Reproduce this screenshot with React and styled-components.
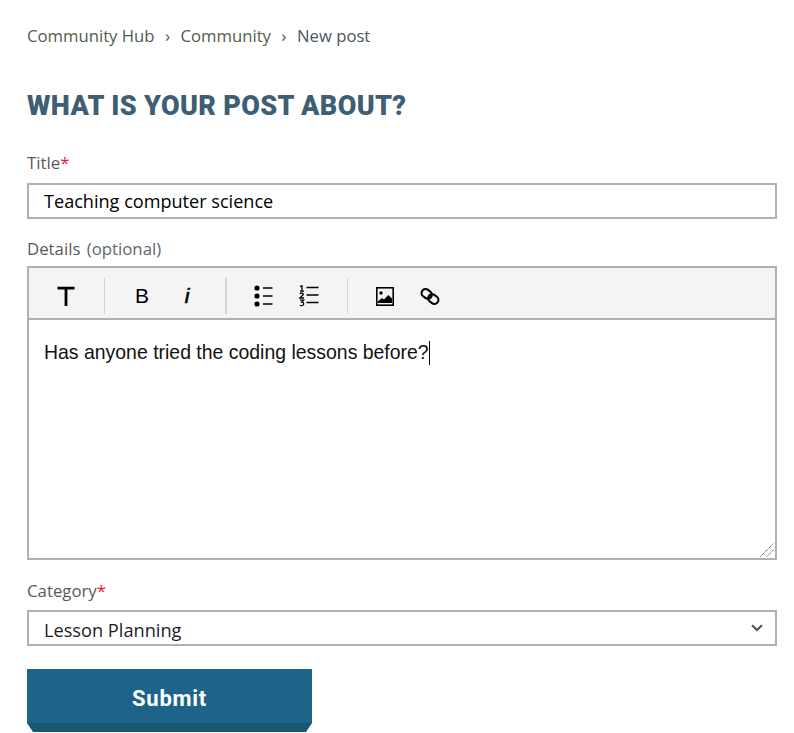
import React from "react";
import styled, { createGlobalStyle } from "styled-components";

const Global = createGlobalStyle`
  html, body { margin: 0; padding: 0; background: #fff; }
  * { box-sizing: border-box; }
`;
const Page = styled.main`
  width: 794px;
  height: 733px;
  overflow: hidden;
  padding: 25px 17px 0 27px;
  font-family: "Open Sans", "Noto Sans", sans-serif;
`;
const Crumbs = styled.nav`
  display: flex;
  align-items: center;
  height: 22px;
  font-size: 16.7px;
  line-height: 22px;
`;
const Crumb = styled.span`
  color: ${(p) => (p.$current ? "#4a5560" : "#4f5d4c")};
`;
const Sep = styled.span`
  width: 26px;
  text-align: center;
  font-size: 16px;
  color: #3d4d55;
`;
const Heading = styled.h1`
  margin: 44px 0 0;
  height: 30px;
  font-family: "Roboto", sans-serif;
  font-weight: 900;
  font-size: 27px;
  line-height: 30px;
  letter-spacing: 0.35px;
  color: #3e5e73;
  text-transform: uppercase;
  white-space: nowrap;
`;
const Label = styled.label`
  display: block;
  font-size: 16.8px;
  line-height: 22px;
  height: 22px;
  color: #58595b;
  margin-top: ${(p) => p.$top}px;
`;
const Req = styled.span`
  color: #f0142f;
`;
const Optional = styled.span`
  color: #5d6670;
  margin-left: 2px;
`;
const TextField = styled.input`
  display: block;
  width: 100%;
  height: 36px;
  margin-top: 9px;
  border: 2px solid #b0b0b0;
  border-radius: 0;
  padding: 0 15px;
  background: #fff;
  font: 18.1px/32px "Open Sans", sans-serif;
  color: #000;
  outline: none;
`;
const Editor = styled.div`
  position: relative;
  margin-top: 6px;
  border: 2px solid #b0b0b0;
`;
const Toolbar = styled.div`
  display: flex;
  align-items: center;
  height: 52px;
  padding-top: 6px;
  background: #f4f4f4;
  border-bottom: 2px solid #b0b0b0;
`;
const ToolGroup = styled.div`
  display: flex;
  align-items: center;
  height: 36px;
  width: ${(p) => p.$w}px;
  padding-left: ${(p) => p.$pad}px;
  gap: ${(p) => p.$gap || 0}px;
  border-right: ${(p) => p.$rule}px solid #d4d4d4;
`;
const ToolLetter = styled.span`
  display: block;
  width: 20px;
  text-align: center;
  font-family: "Liberation Sans", Arial, sans-serif;
  font-size: 21px;
  line-height: 24px;
  color: #000;
  font-style: ${(p) => (p.$italic ? "italic" : "normal")};
  -webkit-text-stroke: ${(p) => (p.$italic ? "0.6px #000" : "0")};
`;
const Body = styled.div`
  height: 238px;
  padding: 19px 15px;
  overflow: hidden;
  background: #fff;
  font-family: "Liberation Sans", Arial, sans-serif;
  font-size: 19.45px;
  line-height: 26px;
  color: #111;
`;
const Caret = styled.span`
  display: inline-block;
  width: 1px;
  height: 24px;
  background: #000;
  vertical-align: -6px;
`;
const Grip = styled.svg`
  position: absolute;
  right: 0;
  bottom: 0;
`;
const SelectWrap = styled.div`
  position: relative;
  margin-top: 8px;
`;
const Select = styled.select`
  display: block;
  width: 100%;
  height: 36px;
  border: 2px solid #b0b0b0;
  border-radius: 0;
  padding: 4px 15px 0;
  appearance: none;
  background: #fff;
  font: 18.2px "Open Sans", sans-serif;
  color: #1c1c28;
  outline: none;
`;
const Chevron = styled.svg`
  position: absolute;
  right: 14px;
  top: 14px;
  pointer-events: none;
`;
const Submit = styled.button`
  display: block;
  width: 285px;
  height: 63px;
  margin-top: 23px;
  border: 0;
  padding: 0 0 5px;
  color: #fff;
  font-family: "Roboto", sans-serif;
  font-weight: 700;
  font-size: 22px;
  letter-spacing: 0.7px;
  clip-path: polygon(0 0, 100% 0, 100% 54px, calc(100% - 6px) 100%, 6px 100%, 0 54px);
  background: linear-gradient(#1c6488 54px, #185673 54px);
`;

const S = { fill: "none", stroke: "#000", strokeWidth: 1.7 };
const N = { fill: "none", stroke: "#000", strokeWidth: 1.3 };

const TIcon = () => (
  <svg width="20" height="22" viewBox="0 0 20 22" aria-hidden="true">
    <path d="M1.5 3.2H18.5M10 3.2V21" fill="none" stroke="#000" strokeWidth="2.8" />
  </svg>
);
const ListIcon = () => (
  <svg width="20" height="22" viewBox="0 0 20 22" aria-hidden="true">
    <circle cx="3" cy="3" r="2.6" />
    <circle cx="3" cy="11" r="2.6" />
    <circle cx="3" cy="19" r="2.6" />
    <path d="M9 3H18.5M9 11H18.5M9 19H18.5" {...S} />
  </svg>
);
const OrderedIcon = () => (
  <svg width="20" height="22" viewBox="0 0 20 22" aria-hidden="true">
    <path d="M1 1.6L3 .8V6.2M1 6.2H5" {...N} />
    <path d="M1 9C2 7.4 4.6 7.8 4.2 9.6L1 13H5" {...N} />
    <path d="M1 15.2H4.6L2.8 17C5.4 17 5.2 20.8 2.6 20.6C1.8 20.6 1.2 20.4 1 20" {...N} />
    <path d="M7.5 2.5H19.5M7.5 10H19.5M7.5 17.5H19.5" {...S} />
  </svg>
);
const ImageIcon = () => (
  <svg width="18" height="19" viewBox="0 0 18 19" aria-hidden="true">
    <rect x="0.8" y="0.8" width="16.4" height="17.4" fill="none" stroke="#000" strokeWidth="1.6" />
    <circle cx="5" cy="6" r="1.7" />
    <path d="M2 16V14.2L6 11L8 12.6L12.4 8L16 11.6V16Z" />
  </svg>
);
const LinkIcon = () => (
  <svg width="20" height="19" viewBox="0 0 20 19" aria-hidden="true">
    <g fill="none" stroke="#000" strokeWidth="2.1" transform="rotate(38 10 9.5)">
      <rect x="0.4" y="5.5" width="10.8" height="8" rx="4" />
      <rect x="8.8" y="5.5" width="10.8" height="8" rx="4" />
    </g>
  </svg>
);

export default function App() {
  return (
    <Page>
      <Global />
      <Crumbs>
        <Crumb>Community Hub</Crumb>
        <Sep>›</Sep>
        <Crumb>Community</Crumb>
        <Sep>›</Sep>
        <Crumb $current>New post</Crumb>
      </Crumbs>
      <Heading>What is your post about?</Heading>
      <Label $top={31}>Title<Req>*</Req></Label>
      <TextField readOnly value="Teaching computer science" />
      <Label $top={19}>Details <Optional>(optional)</Optional></Label>
      <Editor>
        <Toolbar>
          <ToolGroup $w={76} $pad={27} $rule={1}><TIcon /></ToolGroup>
          <ToolGroup $w={122} $pad={27} $gap={25} $rule={2}>
            <ToolLetter>B</ToolLetter>
            <ToolLetter $italic>i</ToolLetter>
          </ToolGroup>
          <ToolGroup $w={121} $pad={27} $gap={25} $rule={1}>
            <ListIcon />
            <OrderedIcon />
          </ToolGroup>
          <ToolGroup $w={120} $pad={28} $gap={26} $rule={0}>
            <ImageIcon />
            <LinkIcon />
          </ToolGroup>
        </Toolbar>
        <Body>Has anyone tried the coding lessons before?<Caret /></Body>
        <Grip width="16" height="16" viewBox="0 0 16 16" aria-hidden="true">
          <path d="M1.5 14.5L14.5 1.5M8 14.5L14.5 8" fill="none" stroke="#222" strokeWidth="1" strokeDasharray="1 1" />
        </Grip>
      </Editor>
      <Label $top={20}>Category<Req>*</Req></Label>
      <SelectWrap>
        <Select defaultValue="Lesson Planning">
          <option>Lesson Planning</option>
        </Select>
        <Chevron width="12" height="8" viewBox="0 0 12 8" aria-hidden="true">
          <path d="M1 1.2L6 6L11 1.2" fill="none" stroke="#555" strokeWidth="2.2" />
        </Chevron>
      </SelectWrap>
      <Submit type="button">Submit</Submit>
    </Page>
  );
}
